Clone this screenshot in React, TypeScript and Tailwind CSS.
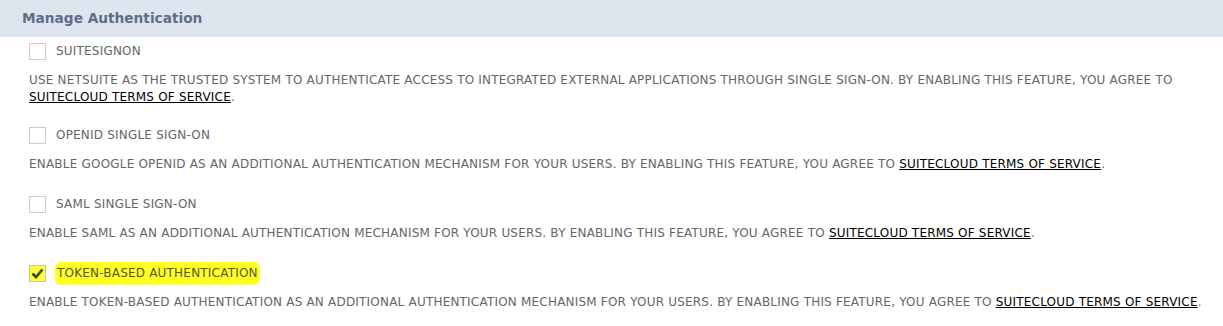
const font = { fontFamily: '"DejaVu Sans", Verdana, sans-serif' };

type Item = {
  label: string;
  text: string;
  checked?: boolean;
};

const items: Item[] = [
  {
    label: "SUITESIGNON",
    text: "USE NETSUITE AS THE TRUSTED SYSTEM TO AUTHENTICATE ACCESS TO INTEGRATED EXTERNAL APPLICATIONS THROUGH SINGLE SIGN-ON. BY ENABLING THIS FEATURE, YOU AGREE TO",
  },
  {
    label: "OPENID SINGLE SIGN-ON",
    text: "ENABLE GOOGLE OPENID AS AN ADDITIONAL AUTHENTICATION MECHANISM FOR YOUR USERS. BY ENABLING THIS FEATURE, YOU AGREE TO",
  },
  {
    label: "SAML SINGLE SIGN-ON",
    text: "ENABLE SAML AS AN ADDITIONAL AUTHENTICATION MECHANISM FOR YOUR USERS. BY ENABLING THIS FEATURE, YOU AGREE TO",
  },
  {
    label: "TOKEN-BASED AUTHENTICATION",
    text: "ENABLE TOKEN-BASED AUTHENTICATION AS AN ADDITIONAL AUTHENTICATION MECHANISM FOR YOUR USERS. BY ENABLING THIS FEATURE, YOU AGREE TO",
    checked: true,
  },
];

function Checkbox({ checked }: { checked?: boolean }) {
  if (checked) {
    return (
      <span className="w-[17px] h-[17px] border border-[#c8c8a0] bg-[#ffff33] flex items-center justify-center">
        <svg width="13" height="11" viewBox="0 0 13 11">
          <path d="M1.5 5.5 L5 9 L11.5 1.5" fill="none" stroke="#2f4a1a" strokeWidth="2.6" />
        </svg>
      </span>
    );
  }
  return <span className="w-[17px] h-[17px] border border-[#cccccc] bg-white" />;
}

export default function App() {
  return (
    <div className="w-[1223px] h-[326px] bg-white overflow-hidden" style={font}>
      <div className="h-[37px] bg-[#dfe5ef] flex items-center pl-[22px]">
        <span className="text-[13.7px] font-bold text-[#5d6e8c]">Manage Authentication</span>
      </div>
      <div className="pl-[29px] pt-[6px] flex flex-col gap-[23px]">
        {items.map((item, i) => (
          <div key={item.label} className={i === 0 ? "-mb-[2px]" : ""}>
            <div className="flex items-center h-[17px]">
              <Checkbox checked={item.checked} />
              {item.checked ? (
                <span className="ml-[9px] -my-[4px] bg-[#ffff22] rounded-[6px] px-[2px] py-[3px] text-[12px] tracking-[0.2px] leading-[17px] text-[#555533]">
                  {item.label}
                </span>
              ) : (
                <span className="ml-[10px] text-[12px] tracking-[0.2px] leading-[17px] text-[#666666]">{item.label}</span>
              )}
            </div>
            <p className="mt-[12px] pr-[16px] text-[12px] tracking-[0.2px] leading-[17px] text-[#666666]">
              {item.text}{" "}
              <a href="#" className="text-black underline">SUITECLOUD TERMS OF SERVICE</a>.
            </p>
          </div>
        ))}
      </div>
    </div>
  );
}
